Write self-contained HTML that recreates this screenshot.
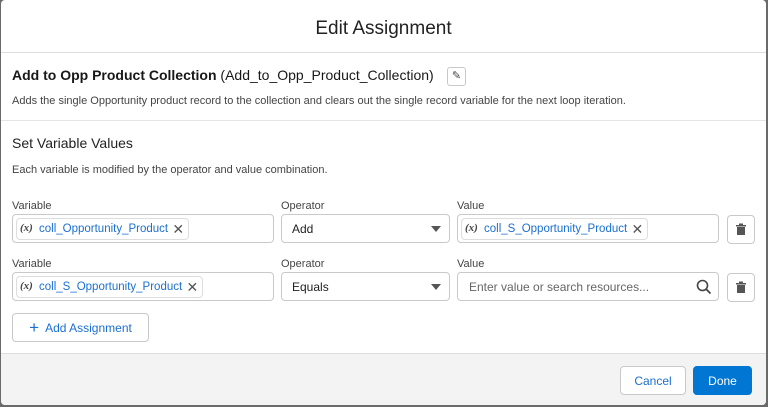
<!DOCTYPE html>
<html><head><style>
*{box-sizing:border-box;margin:0;padding:0}
body{width:768px;height:407px;background:#6a6a6a;font-family:"Liberation Sans",sans-serif;color:#181818;position:relative;overflow:hidden}
.modal{position:absolute;left:1px;top:0;width:765px;height:405px;background:#fff;border-radius:4px;overflow:hidden}
.abs{position:absolute}
.hdr{left:0;top:0;width:100%;height:53px;border-bottom:1px solid #ddd;text-align:center;font-size:19px;line-height:57px;color:#222}
.lbl{font-size:11px;color:#444}
.box{border:1px solid #c9c9c9;border-radius:4px;background:#fff;height:29px}
.pill{position:absolute;left:3px;top:3px;height:22px;border:1px solid #ddd;border-radius:4px;font-size:11.5px;color:#1b6fd0;line-height:21px;padding-left:22px;padding-right:20px;white-space:nowrap}
.pill .x{position:absolute;right:4px;top:0;color:#555;font-size:14px}
.pill .ic{position:absolute;left:3px;top:-1px;color:#444;font-size:11px;font-family:"Liberation Serif",serif;font-style:italic;font-weight:bold}
.sel{font-size:12px;line-height:29px;padding-left:10px;color:#222}
.sel:after{content:"";position:absolute;right:8px;top:11px;border-left:5px solid transparent;border-right:5px solid transparent;border-top:6px solid #555}
.trash{width:28px;height:29px;border:1px solid #c9c9c9;border-radius:4px}
.btn{border:1px solid #c9c9c9;border-radius:4px;background:#fff;font-size:12px;color:#1b6fd0;text-align:center}
</style></head><body>
<div class="modal">
<div class="abs hdr">Edit Assignment</div>
<div class="abs" style="left:11px;top:67px;font-size:14px;white-space:nowrap"><b>Add to Opp Product Collection</b> (Add_to_Opp_Product_Collection)</div>
<div class="abs" style="left:446px;top:67px;width:19px;height:19px;border:1px solid #c9c9c9;border-radius:3px;font-size:11px;text-align:center;line-height:17px;color:#444">✎</div>
<div class="abs" style="left:11px;top:95px;font-size:11px;color:#444">Adds the single Opportunity product record to the collection and clears out the single record variable for the next loop iteration.</div>
<div class="abs" style="left:0;top:120px;width:100%;border-top:1px solid #e5e5e5"></div>
<div class="abs" style="left:11px;top:135px;font-size:14px;color:#222">Set Variable Values</div>
<div class="abs" style="left:11px;top:164px;font-size:11px;color:#444">Each variable is modified by the operator and value combination.</div>

<div class="abs lbl" style="left:11px;top:200px">Variable</div>
<div class="abs lbl" style="left:280px;top:200px">Operator</div>
<div class="abs lbl" style="left:456px;top:200px">Value</div>
<div class="abs box" style="left:11px;top:214px;width:262px"><div class="pill"><span class="ic">(x)</span>coll_Opportunity_Product<span class="x">✕</span></div></div>
<div class="abs box sel" style="left:280px;top:214px;width:169px">Add</div>
<div class="abs box" style="left:456px;top:214px;width:262px"><div class="pill"><span class="ic">(x)</span>coll_S_Opportunity_Product<span class="x">✕</span></div></div>
<div class="abs trash" style="left:726px;top:215px"><svg width="26" height="27" viewBox="0 0 26 27"><rect x="9" y="11" width="8" height="8" fill="#555"/><rect x="8" y="9" width="10" height="1.5" fill="#555"/><rect x="11" y="7.5" width="4" height="1.5" fill="#555"/></svg></div>

<div class="abs lbl" style="left:11px;top:258px">Variable</div>
<div class="abs lbl" style="left:280px;top:258px">Operator</div>
<div class="abs lbl" style="left:456px;top:258px">Value</div>
<div class="abs box" style="left:11px;top:272px;width:262px"><div class="pill"><span class="ic">(x)</span>coll_S_Opportunity_Product<span class="x">✕</span></div></div>
<div class="abs box sel" style="left:280px;top:272px;width:169px">Equals</div>
<div class="abs box" style="left:456px;top:272px;width:262px;font-size:12px;color:#666;line-height:29px;padding-left:11px">Enter value or search resources...<svg class="abs" style="right:6px;top:6px" width="16" height="16" viewBox="0 0 16 16"><circle cx="6.5" cy="6.5" r="5" fill="none" stroke="#444" stroke-width="1.6"/><path d="M10 10l4.5 4.5" stroke="#444" stroke-width="1.8"/></svg></div>
<div class="abs trash" style="left:726px;top:273px"><svg width="26" height="27" viewBox="0 0 26 27"><rect x="9" y="11" width="8" height="8" fill="#555"/><rect x="8" y="9" width="10" height="1.5" fill="#555"/><rect x="11" y="7.5" width="4" height="1.5" fill="#555"/></svg></div>

<div class="abs btn" style="left:11px;top:313px;width:137px;height:29px;line-height:28px"><span style="font-size:17px;vertical-align:-1px;margin-right:6px">+</span>Add Assignment</div>

<div class="abs" style="left:0;top:353px;width:100%;height:52px;background:#f3f3f3;border-top:1px solid #ddd"></div>
<div class="abs btn" style="left:619px;top:366px;width:66px;height:29px;line-height:28px">Cancel</div>
<div class="abs btn" style="left:692px;top:366px;width:59px;height:29px;line-height:28px;background:#0176d3;border-color:#0176d3;color:#fff">Done</div>
</div>
</body></html>
